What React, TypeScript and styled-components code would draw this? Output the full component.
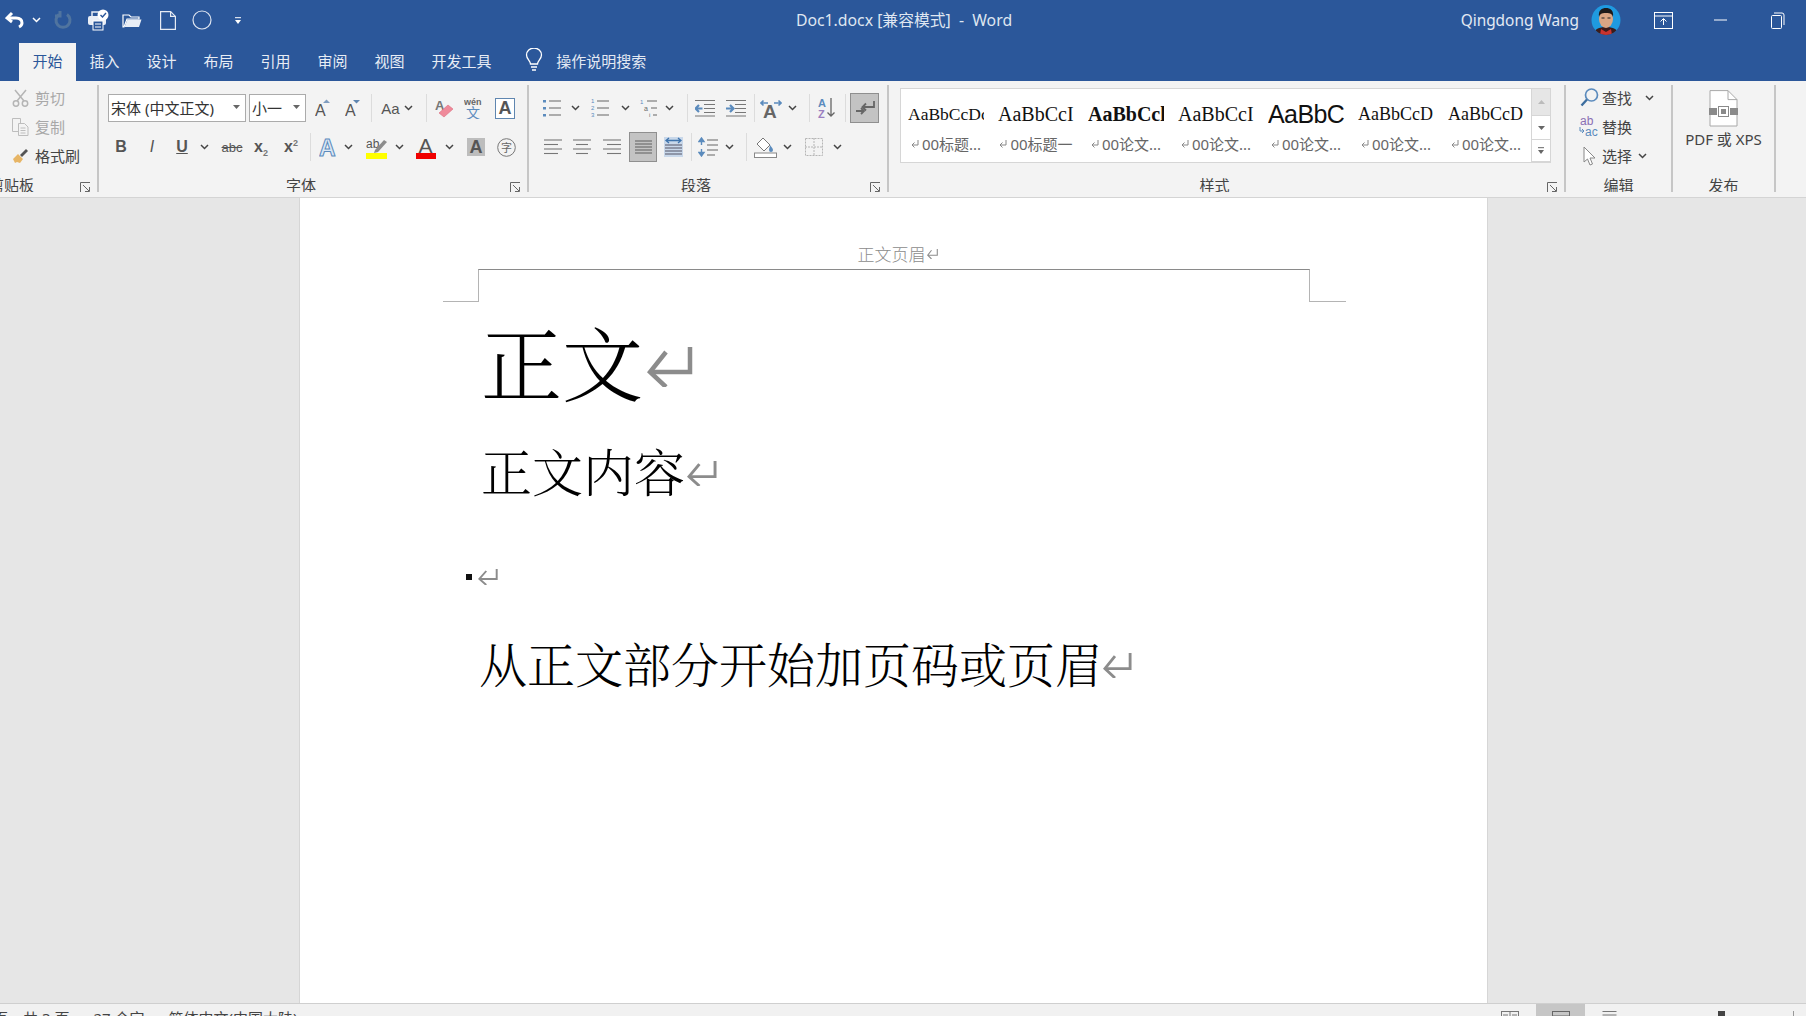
import React from 'react';
import styled, { createGlobalStyle } from 'styled-components';

const UI_FONT = `"Noto Sans", "Noto Sans CJK SC", sans-serif`;
const DOC_FONT = `"Liberation Serif", "Noto Serif CJK SC", "Noto Sans CJK SC", serif`;
const INK = '#555';
const BLUE = '#5b8bbd';

const GlobalStyle = createGlobalStyle`
  html, body { margin: 0; padding: 0; background: #e6e6e6; }
  body { font-family: ${UI_FONT}; overflow: hidden; }
`;

const Window = styled.div`
  width: 1806px;
  height: 1016px;
  display: flex;
  flex-direction: column;
  overflow: hidden;
`;

const Chrome = styled.header`
  background: #2b579a;
  color: #fff;
`;

const TitleRow = styled.div`
  height: 43px;
  display: grid;
  grid-template-columns: 1fr auto 1fr;
  align-items: center;
  padding-bottom: 3px;
  box-sizing: border-box;
`;

const QuickAccess = styled.div`
  display: flex;
  align-items: center;
`;

const TitleText = styled.div`
  font-size: 15.8px;
  color: #dfe6f1;
  white-space: pre;
  padding-left: 2px;
  margin-bottom: 1px;
`;

const WindowControls = styled.div`
  display: flex;
  align-items: center;
  justify-content: flex-end;
  padding-right: 21px;
`;

const UserName = styled.span`
  font-size: 15.4px;
  color: #e3e9f3;
  margin-right: 12px;
`;

const TabRow = styled.nav`
  height: 38px;
  display: flex;
  padding-left: 19px;
`;

const Tab = styled.div<{ $active?: boolean }>`
  padding: 0 13.5px 4px;
  display: flex;
  align-items: center;
  font-size: 15px;
  color: ${({ $active }) => ($active ? '#2b579a' : '#e8edf5')};
  background: ${({ $active }) => ($active ? '#f3f3f3' : 'transparent')};
`;

const TellMe = styled.div`
  margin-left: 20px;
  display: flex;
  align-items: center;
  gap: 13px;
  font-size: 15px;
  color: #e3e9f3;
  padding-bottom: 4px;
`;

const Ribbon = styled.section`
  height: 116px;
  background: #f3f3f3;
  border-bottom: 1px solid #d4d4d4;
  display: flex;
  overflow: hidden;
  flex: none;
`;

const Group = styled.div<{ $w: number; $ml?: number }>`
  flex: 0 0 auto;
  width: ${({ $w }) => $w}px;
  margin-left: ${({ $ml }) => $ml ?? 0}px;
  height: 107px;
  margin-top: 4px;
  display: flex;
  flex-direction: column;
  overflow: hidden;
  border-right: 2px solid #c6c6c6;
  box-sizing: content-box;
`;

const GroupBody = styled.div<{ $pt?: number; $pl?: number }>`
  flex: none;
  height: 90px;
  box-sizing: border-box;
  padding-top: ${({ $pt }) => $pt ?? 8}px;
  padding-left: ${({ $pl }) => $pl ?? 0}px;
  display: flex;
  flex-direction: column;
`;

const GroupFoot = styled.div`
  flex: none;
  display: flex;
  height: 20px;
`;

const GroupLabel = styled.div`
  flex: 1;
  text-align: center;
  font-size: 15px;
  line-height: 20px;
  color: #444;
`;

const LauncherSlot = styled.div`
  flex: 0 0 24px;
  display: flex;
  align-items: flex-start;
  justify-content: center;
  padding-top: 7px;
`;

const ToolRow = styled.div<{ $pl?: number; $mt?: number }>`
  display: flex;
  align-items: center;
  height: 30px;
  margin-top: ${({ $mt }) => $mt ?? 0}px;
  padding-left: ${({ $pl }) => $pl ?? 0}px;
`;

const Tool = styled.div<{ $w: number; $ml?: number; $on?: boolean }>`
  flex: 0 0 ${({ $w }) => $w}px;
  height: 30px;
  margin-left: ${({ $ml }) => $ml ?? 0}px;
  display: flex;
  align-items: center;
  justify-content: center;
  gap: 4px;
  box-sizing: border-box;
  background: ${({ $on }) => ($on ? '#c3c3c3' : 'transparent')};
  border: ${({ $on }) => ($on ? '1px solid #8f8f8f' : 'none')};
`;

const Sep = styled.div<{ $ml?: number; $mr?: number }>`
  flex: 0 0 1px;
  height: 28px;
  background: #dcdcdc;
  margin-left: ${({ $ml }) => $ml ?? 0}px;
  margin-right: ${({ $mr }) => $mr ?? 0}px;
`;

const Select = styled.div<{ $w: number; $ml?: number }>`
  flex: 0 0 ${({ $w }) => $w}px;
  height: 28px;
  margin-left: ${({ $ml }) => $ml ?? 0}px;
  box-sizing: border-box;
  background: #fff;
  border: 1px solid #ababab;
  display: flex;
  align-items: center;
  justify-content: space-between;
  padding: 0 5px 2px 2px;
  font-size: 15px;
  color: #333;
  white-space: nowrap;
`;

const Glyph = styled.span<{ $size?: number; $bold?: boolean; $italic?: boolean; $under?: boolean; $strike?: boolean; $color?: string; $family?: string }>`
  font-family: ${({ $family }) => $family ?? `"Liberation Sans", sans-serif`};
  font-size: ${({ $size }) => $size ?? 16}px;
  font-weight: ${({ $bold }) => ($bold ? 700 : 400)};
  font-style: ${({ $italic }) => ($italic ? 'italic' : 'normal')};
  text-decoration: ${({ $under, $strike }) => ($under ? 'underline' : $strike ? 'line-through' : 'none')};
  color: ${({ $color }) => $color ?? INK};
  line-height: 1;
`;

const Sub = styled.sub`
  font-size: 9px;
  color: #777;
  line-height: 0;
`;

const Sup = styled.sup`
  font-size: 9px;
  color: #777;
  line-height: 0;
`;

const BoxedA = styled.div`
  width: 20px;
  height: 21px;
  box-sizing: border-box;
  border: 1px solid #5f86b0;
  background: #fff;
  display: flex;
  align-items: center;
  justify-content: center;
`;

const ShadedA = styled.div`
  width: 18px;
  height: 18px;
  background: #bdbdbd;
  display: flex;
  align-items: center;
  justify-content: center;
`;

const ClipRow = styled.div<{ $muted?: boolean }>`
  height: 29px;
  box-sizing: border-box;
  padding: 0 0 4px 11px;
  display: flex;
  align-items: center;
  gap: 6px;
  font-size: 15px;
  color: ${({ $muted }) => ($muted ? '#a8a8a8' : '#444')};
  white-space: nowrap;
`;

const IconCell = styled.div<{ $w?: number }>`
  flex: 0 0 ${({ $w }) => $w ?? 18}px;
  display: flex;
  align-items: center;
  justify-content: center;
`;

const Gallery = styled.div`
  margin: -5px 0 0 11px;
  width: 651px;
  height: 75px;
  box-sizing: border-box;
  background: #fff;
  border: 1px solid #d6d6d6;
  display: flex;
`;

const StyleItem = styled.div`
  flex: 0 0 90px;
  display: flex;
  flex-direction: column;
  align-items: center;
  overflow: hidden;
  padding: 0 7px;
  box-sizing: border-box;
`;

const StylePreview = styled.div<{ $size: number; $bold?: boolean; $sans?: boolean; $color?: string }>`
  height: 47px;
  width: 100%;
  box-sizing: border-box;
  padding-top: 3px;
  overflow: hidden;
  display: flex;
  align-items: center;
  justify-content: flex-start;
  white-space: nowrap;
  font-family: ${({ $sans }) => ($sans ? `"Liberation Sans", sans-serif` : `"Liberation Serif", serif`)};
  font-size: ${({ $size }) => $size}px;
  font-weight: ${({ $bold }) => ($bold ? 700 : 400)};
  letter-spacing: ${({ $sans }) => ($sans ? '-0.6px' : '0')};
  color: ${({ $color }) => $color ?? '#111'};
`;

const StyleName = styled.div`
  font-size: 15px;
  line-height: 16px;
  color: #666;
  white-space: nowrap;
  display: flex;
  align-items: center;
  gap: 3px;
`;

const GalleryScroll = styled.div`
  margin-left: auto;
  flex: 0 0 18px;
  display: flex;
  flex-direction: column;
  border-left: 1px solid #d6d6d6;
`;

const ScrollBtn = styled.div<{ $grey?: boolean; $h: number }>`
  height: ${({ $h }) => $h}px;
  background: ${({ $grey }) => ($grey ? '#e6e6e6' : '#fff')};
  border-bottom: 1px solid #d6d6d6;
  box-sizing: border-box;
  display: flex;
  align-items: center;
  justify-content: center;
`;

const EditRow = styled.div`
  height: 29px;
  box-sizing: border-box;
  display: flex;
  align-items: center;
  padding: 0 0 4px 13px;
  font-size: 15px;
  color: #444;
  white-space: nowrap;
`;

const EditText = styled.span`
  margin-left: 3px;
  margin-right: 6px;
`;

const PublishBody = styled.div`
  flex: none;
  height: 90px;
  padding-top: 5px;
  box-sizing: border-box;
  display: flex;
  flex-direction: column;
  align-items: center;
  gap: 1px;
  font-size: 15px;
  color: #444;
  white-space: nowrap;
`;

const DocArea = styled.main`
  flex: 1;
  min-height: 0;
  display: flex;
  padding-left: 299px;
  background: #e6e6e6;
`;

const Page = styled.article`
  width: 1189px;
  box-sizing: border-box;
  background: #fff;
  border-left: 1px solid #d6d6d6;
  border-right: 1px solid #d6d6d6;
  padding-top: 46px;
  font-family: ${DOC_FONT};
  color: #000;
`;

const HeaderLine = styled.div`
  height: 20px;
  line-height: 20px;
  font-size: 17px;
  color: #8c8c8c;
  text-align: center;
  font-family: "Noto Sans CJK SC", sans-serif;
  font-weight: 300;
  display: flex;
  justify-content: center;
  align-items: center;
  padding-left: 8px;
  gap: 1px;
`;

const HeaderMarks = styled.div`
  margin: 5px 0 0 143px;
  display: flex;
  height: 33px;
`;

const MarkStub = styled.div<{ $w: number }>`
  flex: 0 0 ${({ $w }) => $w}px;
  border-bottom: 1px solid #b4b4b4;
`;

const MarkBracket = styled.div`
  flex: 0 0 832px;
  border-top: 1px solid #8a8a8a;
  border-left: 1px solid #b4b4b4;
  border-right: 1px solid #b4b4b4;
  box-sizing: border-box;
`;

const Para = styled.p<{ $size: number; $lh: number; $mt: number; $pl: number }>`
  margin: ${({ $mt }) => $mt}px 0 0 ${({ $pl }) => $pl}px;
  font-family: inherit;
  font-size: ${({ $size }) => $size}px;
  line-height: ${({ $lh }) => $lh}px;
  height: ${({ $lh }) => $lh}px;
  display: flex;
  align-items: center;
  font-weight: 300;
  white-space: nowrap;
`;

const ReturnIndent = styled.span<{ $ml: number }>`
  display: flex;
  margin-left: ${({ $ml }) => $ml}px;
  padding-bottom: 3px;
`;

const Bullet = styled.span`
  width: 6px;
  height: 6px;
  background: #111;
  margin-right: 6px;
`;

const StatusBar = styled.footer`
  height: 13px;
  flex: none;
  box-sizing: border-box;
  background: #f1f1f1;
  border-top: 1px solid #cfcfcf;
  display: flex;
  align-items: flex-start;
  overflow: hidden;
  font-size: 15px;
  line-height: 20px;
  color: #444;
`;

const StatusLeft = styled.div`
  display: flex;
  margin-left: -7px;
  padding-top: 4px;
  gap: 24px;
  flex: 1;
`;

const StatusItem = styled.span`
  white-space: pre;
`;

const ProofCell = styled.span`
  padding: 3px 0 0 2px;
`;

const ViewButton = styled.div<{ $w: number; $on?: boolean; $ml?: number }>`
  flex: 0 0 ${({ $w }) => $w}px;
  height: 13px;
  margin-left: ${({ $ml }) => $ml ?? 0}px;
  background: ${({ $on }) => ($on ? '#c6c6c6' : 'transparent')};
  display: flex;
  justify-content: center;
  padding-top: 7px;
  box-sizing: border-box;
`;

const ZoomThumb = styled.div`
  flex: 0 0 7px;
  height: 6px;
  margin: 7px 0 0 101px;
  background: #444;
`;

const ZoomTick = styled.div`
  flex: 0 0 1px;
  height: 6px;
  margin: 7px 12px 0 68px;
  background: #999;
`;

/* ---- icons ---- */

type IP = { size?: number; color?: string };

const Chev = ({ color = '#444' }: IP) => (
  <svg width="9" height="6" viewBox="0 0 9 6"><path d="M1 1l3.5 3.5L8 1" fill="none" stroke={color} strokeWidth="1.5" /></svg>
);
const Tri = ({ color = '#666' }: IP) => (
  <svg width="7" height="4" viewBox="0 0 7 4"><path d="M0 0h7L3.5 4z" fill={color} /></svg>
);
const TriUp = ({ color = '#bbb' }: IP) => (
  <svg width="7" height="4" viewBox="0 0 7 4"><path d="M0 4h7L3.5 0z" fill={color} /></svg>
);
const Launcher = () => (
  <svg width="11" height="11" viewBox="0 0 11 11" fill="none" stroke="#666"><path d="M.5 10V.5H10" /><path d="M3 3l6 6M5 9.500h4.500V5" /></svg>
);
const Undo = () => (
  <svg width="20" height="18" viewBox="0 0 20 18" fill="none" stroke="#fff" strokeWidth="3"><path d="M7 2L2 7l5 4" /><path d="M3 7h8c5 0 6 3 6 5 0 2-1 3-3 4" /></svg>
);
const Redo = () => (
  <svg width="18" height="20" viewBox="0 0 18 20" fill="none" stroke="#50749f" strokeWidth="3"><path d="M5 4.500a7 7 0 1 0 8 0" /><path d="M6 1v5H1" /></svg>
);
const QuickPrint = () => (
  <svg width="21" height="22" viewBox="0 0 21 22">
    <rect x="0" y="7" width="18" height="9" rx="2" fill="#e9eef6" />
    <rect x="4" y="3" width="7" height="5" fill="none" stroke="#e9eef6" strokeWidth="1.5" />
    <rect x="5" y="12" width="10" height="9" fill="#2b579a" stroke="#fff" />
    <path d="M7 15h6M7 18h6" stroke="#fff" />
    <circle cx="15" cy="6" r="5.500" fill="#fff" />
    <path d="M12.500 6l2 2 3.500-4" stroke="#2b579a" strokeWidth="1.400" fill="none" />
  </svg>
);
const Folder = () => (
  <svg width="20" height="16" viewBox="0 0 20 16">
    <path d="M1 15V3h6l2 2h8v2H5L2 15z" fill="none" stroke="#fff" strokeWidth="1.200" />
    <path d="M5.500 7.500H19.500L17 15H2.500z" fill="#e9eef6" />
  </svg>
);
const DocOutline = () => (
  <svg width="16" height="19" viewBox="0 0 16 19" fill="none" stroke="#e6ebf4" strokeWidth="1.200"><path d="M.6.6h10l4.800 4.800v13H.6z" /><path d="M10.600.6v4.800h4.800" /></svg>
);
const Circle = () => (
  <svg width="20" height="20" viewBox="0 0 20 20"><circle cx="10" cy="10" r="9" fill="none" stroke="#dde4f0" strokeWidth="1.200" /></svg>
);
const QatMore = () => (
  <svg width="8" height="7" viewBox="0 0 8 7"><path d="M1 .7h6" stroke="#fff" /><path d="M1 3h6L4 7z" fill="#fff" /></svg>
);
const QatMoreDark = () => (
  <svg width="8" height="7" viewBox="0 0 8 7"><path d="M1 .7h6" stroke="#666" /><path d="M1 3h6L4 7z" fill="#666" /></svg>
);
const Avatar = () => (
  <svg width="30" height="30" viewBox="0 0 30 30">
    <defs><clipPath id="av"><ellipse cx="15" cy="15" rx="14.500" ry="15" /></clipPath></defs>
    <g clipPath="url(#av)">
      <rect width="30" height="30" fill="#1f9ae0" />
      <path d="M3 30c0-6 5-8 12-8s12 2 12 8z" fill="#3a1c1c" />
      <path d="M10 24l5 3 5-3 1 6H9z" fill="#c8332f" />
      <ellipse cx="15" cy="14" rx="7" ry="9" fill="#d9a684" />
      <path d="M8 12c-1-7 3-9 7-9s8 2 7 9c-1-3-2-4-7-4s-6 1-7 4z" fill="#1c1a1a" />
      <path d="M10.500 13h3M16.500 13h3" stroke="#222" strokeWidth="1.200" />
    </g>
  </svg>
);
const RibbonDisplay = () => (
  <svg width="19" height="17" viewBox="0 0 19 17" fill="none" stroke="#fff"><rect x=".5" y=".5" width="18" height="16" /><path d="M.5 4h18" /><path d="M9.500 13V7M6.500 9.500l3-3 3 3" /></svg>
);
const Minimize = () => (
  <svg width="13" height="2" viewBox="0 0 13 2"><path d="M0 1h13" stroke="#fff" /></svg>
);
const Restore = () => (
  <svg width="14" height="17" viewBox="0 0 14 17" fill="none" stroke="#fff"><rect x=".5" y="3.500" width="10" height="13" rx="1" /><path d="M3 1h8a2 2 0 0 1 2 2v10" /></svg>
);
const Bulb = () => (
  <svg width="18" height="24" viewBox="0 0 18 24" fill="none" stroke="#fff" strokeWidth="1.300"><path d="M5.500 16c0-3-4-5-4-9a7.500 7 0 0 1 15 0c0 4-4 6-4 9z" /><path d="M6 19h6M7 22h4" /></svg>
);
const Scissors = () => (
  <svg width="17" height="18" viewBox="0 0 17 18" fill="none" stroke="#b5b5b5" strokeWidth="1.500"><path d="M3 1l9 11M14 1L5 12" /><circle cx="4" cy="14.500" r="2.700" /><circle cx="13" cy="14.500" r="2.700" /></svg>
);
const CopyIcon = () => (
  <svg width="17" height="18" viewBox="0 0 17 18" fill="none" stroke="#bdbdbd"><path d="M.5 .5h8v13h-8z" /><path d="M6.500 5.500h6l3.500 3.500v8.500H6.500z" fill="#f3f3f3" /><path d="M8.500 10h5M8.500 12.500h5M8.500 15h5" /></svg>
);
const Painter = () => (
  <svg width="17" height="16" viewBox="0 0 17 16"><path d="M1 11l5-5 5 5-3 4-3-1-2 1z" fill="#e7b565" /><path d="M8 7l6-6 2 2-6 6z" fill="#555" /></svg>
);
const SizedA = ({ up }: { up?: boolean }) => (
  <svg width="16" height="20" viewBox="0 0 16 20">
    <text x="0" y="18" fontFamily="Liberation Sans" fontSize="16" fill={INK}>A</text>
    <path d={up ? 'M8 4h7l-3.500-3.500z' : 'M8 1h7l-3.500 3.500z'} fill={up ? '#7f9dbf' : '#5f86b0'} transform="translate(0 1)" />
  </svg>
);
const ClearFormat = () => (
  <svg width="20" height="20" viewBox="0 0 20 20">
    <text x="0" y="12" fontFamily="Liberation Sans" fontSize="13" fontWeight="700" fill="#777">A</text>
    <path d="M4 15l9-8 5 4-9 8z" fill="#ef8a9a" stroke="#dc6b80" strokeWidth=".6" />
  </svg>
);
const Wen = () => (
  <svg width="20" height="22" viewBox="0 0 20 22">
    <text x="0" y="8" fontFamily="Liberation Sans" fontSize="9" fontWeight="700" fill="#666">wén</text>
    <text x="2" y="21" fontFamily="Noto Sans CJK SC" fontSize="14" fill="#5b8bbd">文</text>
  </svg>
);
const OutlineA = () => (
  <svg width="19" height="21" viewBox="0 0 19 21">
    <text x="0" y="19" fontFamily="Liberation Sans" fontSize="23" fontWeight="700" fill="#dbe8f5" stroke="#5b8bbd" strokeWidth="1">A</text>
  </svg>
);
const HighlightIcon = () => (
  <svg width="22" height="23" viewBox="0 0 22 23">
    <text x="0" y="12" fontFamily="Liberation Sans" fontSize="12" fill="#555">ab</text>
    <path d="M9 14l9-10 3 2-9 10-4 1z" fill="#8c8c8c" />
    <rect y="17" width="21" height="6" fill="#ffff00" />
  </svg>
);
const ColorA = () => (
  <svg width="20" height="23" viewBox="0 0 20 23">
    <text x="2.500" y="17" fontFamily="Liberation Sans" fontSize="21" fill="#555">A</text>
    <rect y="17" width="20" height="6" fill="#f00000" />
  </svg>
);
const EnclosedChar = () => (
  <svg width="19" height="19" viewBox="0 0 19 19">
    <circle cx="9.500" cy="9.500" r="8.800" fill="none" stroke="#777" />
    <text x="4" y="14" fontFamily="Noto Sans CJK SC" fontSize="11" fill="#666">字</text>
  </svg>
);
const ListIcon = ({ kind }: { kind: 'dot' | 'num' | 'multi' }) => (
  <svg width="20" height="18" viewBox="0 0 20 18" fontFamily="Liberation Sans" fontSize="6">
    <path d={kind === 'multi' ? 'M7 2h10M11 9h6M13 16h4' : 'M6 2h12M6 9h12M6 16h12'} stroke="#666" strokeWidth="1.100" />
    {kind === 'dot' && (
      <g fill={BLUE}><rect x="0" y="1" width="3" height="2.500" /><rect x="0" y="8" width="3" height="2.500" /><rect x="0" y="15" width="3" height="2.500" /></g>
    )}
    {kind === 'num' && (
      <g fill={BLUE}><text x="0" y="4">1</text><text x="0" y="11">2</text><text x="0" y="18">3</text></g>
    )}
    {kind === 'multi' && (
      <g fill="#666"><text x="0" y="5" fill={BLUE}>1</text><text x="4" y="12" fontSize="7">a</text><text x="9" y="18">i</text></g>
    )}
  </svg>
);
const IndentIcon = ({ inc }: { inc?: boolean }) => (
  <svg width="20" height="18" viewBox="0 0 20 18">
    <path d="M0 1.500h20M9 5.500h11M9 9.500h11M9 13.500h11M0 17h20" stroke="#777" strokeWidth="1.100" />
    <path d={inc ? 'M0 9.500h7M4 6l3.500 3.500L4 13' : 'M7.500 9.500h-7M4 6L.5 9.500 4 13'} stroke={BLUE} strokeWidth="2.200" fill="none" />
  </svg>
);
const TextDirection = () => (
  <svg width="22" height="21" viewBox="0 0 22 21">
    <path d="M1 5h7M3.500 2.500L1 5l2.500 2.500M21 5h-7M18.500 2.500L21 5l-2.500 2.500" stroke={BLUE} strokeWidth="1.600" fill="none" />
    <text x="3" y="20" fontFamily="Liberation Sans" fontSize="19" fontWeight="700" fill="#666">A</text>
  </svg>
);
const SortIcon = () => (
  <svg width="18" height="22" viewBox="0 0 18 22">
    <text x="0" y="10" fontFamily="Liberation Sans" fontSize="11" fontWeight="700" fill={BLUE}>A</text>
    <text x="0" y="21" fontFamily="Liberation Sans" fontSize="11" fontWeight="700" fill="#9b7fc0">Z</text>
    <path d="M13 1v18M9.500 15.500L13 19l3.500-3.500" fill="none" stroke="#666" strokeWidth="1.300" />
  </svg>
);
const ParaMark = () => (
  <svg width="20" height="17" viewBox="0 0 20 17" fill="none" stroke="#666" strokeWidth="1.800">
    <path d="M19 1v6H8M11 3.500L7.500 7 11 10.500" />
    <path d="M1 11h8M6 8l3 3-3 3" />
  </svg>
);
const Align = ({ rows }: { rows: [number, number][] }) => (
  <svg width="18" height="16" viewBox="0 0 18 16">
    {rows.map(([a, b], i) => <path key={i} d={`M${a} ${1 + i * 4.5}H${b}`} stroke="#777" strokeWidth="1.100" />)}
  </svg>
);
const JustifyFull = () => (
  <svg width="17" height="15" viewBox="0 0 17 15">
    {[1, 4, 7, 10, 13].map(y => <path key={y} d={`M0 ${y}h17`} stroke="#666" strokeWidth="1.100" />)}
  </svg>
);
const Distribute = () => (
  <svg width="19" height="20" viewBox="0 0 19 20">
    <rect width="19" height="20" fill="#c9d8ea" />
    {[8, 11, 14, 17].map(y => <path key={y} d={`M1 ${y}h17`} stroke="#556" strokeWidth="1" />)}
    <path d="M2 3.500h15M5 1L2 3.500 5 6M14 1l3 2.500L14 6" stroke="#3f74ad" strokeWidth="1.300" fill="none" />
  </svg>
);
const LineSpacing = () => (
  <svg width="20" height="20" viewBox="0 0 20 20">
    <path d="M9 3h11M9 8h11M9 13h11M9 18h8" stroke="#666" strokeWidth="1.100" />
    <path d="M3.500 8V2M1 4.500L3.500 1 6 4.500zM3.500 12v6M1 15.500L3.500 19 6 15.500z" fill={BLUE} stroke={BLUE} strokeWidth="1.400" />
  </svg>
);
const ShadingIcon = () => (
  <svg width="23" height="22" viewBox="0 0 23 22">
    <path d="M9 2l7 7-6 6-7-7z" fill="#fff" stroke="#777" />
    <path d="M16 9c1 2 3 3 3 5a2 2 0 0 1-4 0c0-2 1-3 1-5z" fill={BLUE} />
    <rect x=".5" y="17" width="22" height="4.500" fill="#fff" stroke="#888" />
  </svg>
);
const BorderIcon = () => (
  <svg width="18" height="18" viewBox="0 0 18 18" fill="none" stroke="#b5b5b5" strokeDasharray="2 1"><rect x=".5" y=".5" width="17" height="17" /><path d="M9 0v18M0 9h18" /></svg>
);
const SearchIcon = () => (
  <svg width="19" height="19" viewBox="0 0 19 19" fill="none"><circle cx="11.500" cy="7" r="6" stroke="#5b8bbd" strokeWidth="1.700" /><path d="M7 11.500L1.500 17.500" stroke="#3d6e9f" strokeWidth="2.400" /></svg>
);
const ReplaceIcon = () => (
  <svg width="20" height="21" viewBox="0 0 20 21" fontFamily="Liberation Sans" fontSize="12">
    <text x="1" y="9" fill="#8a6fb3">ab</text>
    <text x="6" y="20" fill="#5b8bbd">ac</text>
    <path d="M1 11v4h4M3 13l2 2-2 2" fill="none" stroke="#5b8bbd" />
  </svg>
);
const CursorIcon = () => (
  <svg width="13" height="20" viewBox="0 0 13 20"><path d="M1 1v15l3.500-3 2.500 6 2.500-1-2.500-6h5z" fill="#fff" stroke="#888" /></svg>
);
const PdfIcon = () => (
  <svg width="29" height="37" viewBox="0 0 29 37">
    <path d="M1 .6h18l9 9V36H1z" fill="#fff" stroke="#a8a8a8" />
    <path d="M19 .6v9h9" fill="none" stroke="#a8a8a8" />
    <rect x="0" y="18" width="8" height="7" fill="#8a8a8a" />
    <rect x="21" y="18" width="8" height="7" fill="#8a8a8a" />
    <rect x="9.500" y="16.500" width="10" height="10" fill="#fff" stroke="#8a8a8a" />
    <rect x="12" y="19" width="5" height="5" fill="#8a8a8a" />
  </svg>
);
const ReturnMark = ({ w, h, color = '#8c8c8c' }: { w: number; h: number; color?: string }) => (
  <svg width={w} height={h} viewBox="0 0 46 40" fill="none" stroke={color} strokeWidth="4.500" preserveAspectRatio="none">
    <path d="M43 0v25H4" />
    <path d="M19 5L3 25l16 15" />
  </svg>
);
const SmallReturn = () => (
  <svg width="8" height="9" viewBox="0 0 8 9" fill="none" stroke="#888"><path d="M7 0v5H1M3.500 2.500L1 5l2.500 2.500" /></svg>
);
const ReadView = () => (
  <svg width="18" height="14" viewBox="0 0 18 14" fill="none" stroke="#777"><rect x=".5" y=".5" width="17" height="13" /><path d="M9 0v14M2 4h5M11 4h5M2 7h5M11 7h5" /></svg>
);
const PrintView = () => (
  <svg width="18" height="14" viewBox="0 0 18 14" fill="none" stroke="#666"><rect x=".5" y=".5" width="17" height="13" /><path d="M0 5h18" /></svg>
);
const WebView = () => (
  <svg width="15" height="14" viewBox="0 0 15 14" fill="none" stroke="#777"><path d="M.5 .5h14M.5 4h14M.5 7.500h9" /></svg>
);
const ProofIcon = () => (
  <svg width="14" height="6" viewBox="0 0 14 6"><circle cx="3.500" cy="3.500" r="3.500" fill="#555" /><rect x="7" y="0" width="7" height="6" fill="none" stroke="#555" /></svg>
);

const STYLE_ITEMS = [
  { text: 'AaBbCcDc', name: '00标题...', size: 17.5 },
  { text: 'AaBbCcI', name: '00标题一', size: 20 },
  { text: 'AaBbCcl', name: '00论文...', size: 20, bold: true },
  { text: 'AaBbCcI', name: '00论文...', size: 20 },
  { text: 'AaBbCc', name: '00论文...', size: 25, sans: true },
  { text: 'AaBbCcD', name: '00论文...', size: 18 },
  { text: 'AaBbCcD', name: '00论文...', size: 18 },
];

const ALIGN_LEFT: [number, number][] = [[0, 18], [0, 14], [0, 18], [0, 14]];
const ALIGN_CENTER: [number, number][] = [[0, 18], [3, 15], [0, 18], [3, 15]];
const ALIGN_RIGHT: [number, number][] = [[0, 18], [4, 18], [0, 18], [4, 18]];

const Foot = ({ label, launcher }: { label: string; launcher?: boolean }) => (
  <GroupFoot>
    <GroupLabel>{label}</GroupLabel>
    {launcher && <LauncherSlot><Launcher /></LauncherSlot>}
  </GroupFoot>
);

const App = () => (
  <Window>
    <GlobalStyle />
    <Chrome>
      <TitleRow>
        <QuickAccess>
          <Tool $w={30}><Undo /></Tool>
          <Tool $w={12}><Chev color="#fff" /></Tool>
          <Tool $w={42}><Redo /></Tool>
          <Tool $w={28}><QuickPrint /></Tool>
          <Tool $w={40}><Folder /></Tool>
          <Tool $w={32}><DocOutline /></Tool>
          <Tool $w={36}><Circle /></Tool>
          <Tool $w={36}><QatMore /></Tool>
        </QuickAccess>
        <TitleText>{'Doc1.docx [兼容模式]  -  Word'}</TitleText>
        <WindowControls>
          <UserName>Qingdong Wang</UserName>
          <Avatar />
          <Tool $w={19} $ml={33}><RibbonDisplay /></Tool>
          <Tool $w={13} $ml={41}><Minimize /></Tool>
          <Tool $w={14} $ml={44}><Restore /></Tool>
        </WindowControls>
      </TitleRow>
      <TabRow>
        <Tab $active>开始</Tab>
        {['插入', '设计', '布局', '引用', '审阅', '视图', '开发工具'].map(t => <Tab key={t}>{t}</Tab>)}
        <TellMe><Bulb />操作说明搜索</TellMe>
      </TabRow>
    </Chrome>

    <Ribbon>
      <Group $w={147} $ml={-50}>
        <GroupBody $pt={0} $pl={50}>
          <ClipRow $muted><IconCell><Scissors /></IconCell>剪切</ClipRow>
          <ClipRow $muted><IconCell><CopyIcon /></IconCell>复制</ClipRow>
          <ClipRow><IconCell><Painter /></IconCell>格式刷</ClipRow>
        </GroupBody>
        <Foot label="剪贴板" launcher />
      </Group>

      <Group $w={428}>
        <GroupBody>
          <ToolRow $pl={9}>
            <Select $w={138}>宋体 (中文正文)<Tri /></Select>
            <Select $w={57} $ml={3}>小一<Tri /></Select>
            <Tool $w={30} $ml={2}><SizedA up /></Tool>
            <Tool $w={30}><SizedA /></Tool>
            <Sep $ml={3} />
            <Tool $w={50}><Glyph $size={15}>Aa</Glyph><Chev /></Tool>
            <Sep $ml={4} $mr={3} />
            <Tool $w={30}><ClearFormat /></Tool>
            <Tool $w={28}><Wen /></Tool>
            <Tool $w={34}><BoxedA><Glyph $size={18} $bold>A</Glyph></BoxedA></Tool>
          </ToolRow>
          <ToolRow $pl={9} $mt={9}>
            <Tool $w={26}><Glyph $size={16} $bold>B</Glyph></Tool>
            <Tool $w={36}><Glyph $size={16} $italic>I</Glyph></Tool>
            <Tool $w={24}><Glyph $size={16} $bold $under>U</Glyph></Tool>
            <Tool $w={20}><Chev /></Tool>
            <Tool $w={36}><Glyph $size={13} $strike>abc</Glyph></Tool>
            <Tool $w={22}><Glyph $size={16} $bold>x<Sub>2</Sub></Glyph></Tool>
            <Tool $w={38}><Glyph $size={16} $bold>x<Sup>2</Sup></Glyph></Tool>
            <Sep />
            <Tool $w={30} $ml={2}><OutlineA /></Tool>
            <Tool $w={10}><Chev /></Tool>
            <Tool $w={36} $ml={6}><HighlightIcon /></Tool>
            <Tool $w={8}><Chev /></Tool>
            <Tool $w={36} $ml={4}><ColorA /></Tool>
            <Tool $w={8} $ml={1}><Chev /></Tool>
            <Tool $w={32} $ml={6}><ShadedA><Glyph $size={18} $bold>A</Glyph></ShadedA></Tool>
            <Tool $w={28}><EnclosedChar /></Tool>
          </ToolRow>
        </GroupBody>
        <Foot label="字体" launcher />
      </Group>

      <Group $w={358}>
        <GroupBody>
          <ToolRow $pl={9}>
            <Tool $w={29}><ListIcon kind="dot" /></Tool>
            <Tool $w={16}><Chev /></Tool>
            <Tool $w={36}><ListIcon kind="num" /></Tool>
            <Tool $w={12}><Chev /></Tool>
            <Tool $w={28} $ml={5}><ListIcon kind="multi" /></Tool>
            <Tool $w={10}><Chev /></Tool>
            <Sep $ml={13} />
            <Tool $w={34}><IndentIcon /></Tool>
            <Tool $w={28}><IndentIcon inc /></Tool>
            <Sep $ml={4} />
            <Tool $w={32}><TextDirection /></Tool>
            <Tool $w={10}><Chev /></Tool>
            <Sep $ml={12} />
            <Tool $w={34}><SortIcon /></Tool>
            <Sep $ml={1} />
            <Tool $w={29} $ml={4} $on><ParaMark /></Tool>
          </ToolRow>
          <ToolRow $pl={9} $mt={9}>
            <Tool $w={29}><Align rows={ALIGN_LEFT} /></Tool>
            <Tool $w={30}><Align rows={ALIGN_CENTER} /></Tool>
            <Tool $w={30}><Align rows={ALIGN_RIGHT} /></Tool>
            <Tool $w={28} $ml={2} $on><JustifyFull /></Tool>
            <Tool $w={32}><Distribute /></Tool>
            <Sep $ml={2} />
            <Tool $w={32}><LineSpacing /></Tool>
            <Tool $w={10}><Chev /></Tool>
            <Sep $ml={12} />
            <Tool $w={36}><ShadingIcon /></Tool>
            <Tool $w={8}><Chev /></Tool>
            <Tool $w={38} $ml={3}><BorderIcon /></Tool>
            <Tool $w={8}><Chev /></Tool>
          </ToolRow>
        </GroupBody>
        <Foot label="段落" launcher />
      </Group>

      <Group $w={675}>
        <GroupBody>
          <Gallery>
            {STYLE_ITEMS.map((s, i) => (
              <StyleItem key={i}>
                <StylePreview $size={s.size} $bold={s.bold} $sans={s.sans}>{s.text}</StylePreview>
                <StyleName><SmallReturn />{s.name}</StyleName>
              </StyleItem>
            ))}
            <GalleryScroll>
              <ScrollBtn $grey $h={27}><TriUp /></ScrollBtn>
              <ScrollBtn $h={24}><Tri /></ScrollBtn>
              <ScrollBtn $h={22}><QatMoreDark /></ScrollBtn>
            </GalleryScroll>
          </Gallery>
        </GroupBody>
        <Foot label="样式" launcher />
      </Group>

      <Group $w={105}>
        <GroupBody $pt={0}>
          <EditRow><IconCell $w={20}><SearchIcon /></IconCell><EditText>查找</EditText><Tool $w={22}><Chev /></Tool></EditRow>
          <EditRow><IconCell $w={20}><ReplaceIcon /></IconCell><EditText>替换</EditText></EditRow>
          <EditRow><IconCell $w={20}><CursorIcon /></IconCell><EditText>选择</EditText><Chev /></EditRow>
        </GroupBody>
        <Foot label="编辑" />
      </Group>

      <Group $w={101}>
        <PublishBody>
          <PdfIcon />
          PDF 或 XPS
        </PublishBody>
        <Foot label="发布" />
      </Group>
    </Ribbon>

    <DocArea>
      <Page>
        <HeaderLine>正文页眉<ReturnMark w={11} h={10} /></HeaderLine>
        <HeaderMarks>
          <MarkStub $w={35} />
          <MarkBracket />
          <MarkStub $w={36} />
        </HeaderMarks>
        <Para $size={81} $lh={96} $mt={18} $pl={181}>正文<ReturnIndent $ml={4}><ReturnMark w={46} h={40} /></ReturnIndent></Para>
        <Para $size={51} $lh={60} $mt={29} $pl={181}>正文内容<ReturnIndent $ml={2}><ReturnMark w={30} h={25} /></ReturnIndent></Para>
        <Para $size={16} $lh={30} $mt={57} $pl={166}><Bullet /><ReturnMark w={20} h={16} /></Para>
        <Para $size={48} $lh={60} $mt={45} $pl={179}>从正文部分开始加页码或页眉<ReturnIndent $ml={0}><ReturnMark w={29} h={25} /></ReturnIndent></Para>
      </Page>
    </DocArea>

    <StatusBar>
      <StatusLeft>
        <StatusItem>页，共 3 页</StatusItem>
        <StatusItem>27 个字</StatusItem>
        <StatusItem>简体中文(中国大陆)</StatusItem>
        <ProofCell><ProofIcon /></ProofCell>
      </StatusLeft>
      <ViewButton $w={18}><ReadView /></ViewButton>
      <ViewButton $w={49} $on $ml={17}><PrintView /></ViewButton>
      <ViewButton $w={15} $ml={17}><WebView /></ViewButton>
      <ZoomThumb />
      <ZoomTick />
    </StatusBar>
  </Window>
);

export default App;
